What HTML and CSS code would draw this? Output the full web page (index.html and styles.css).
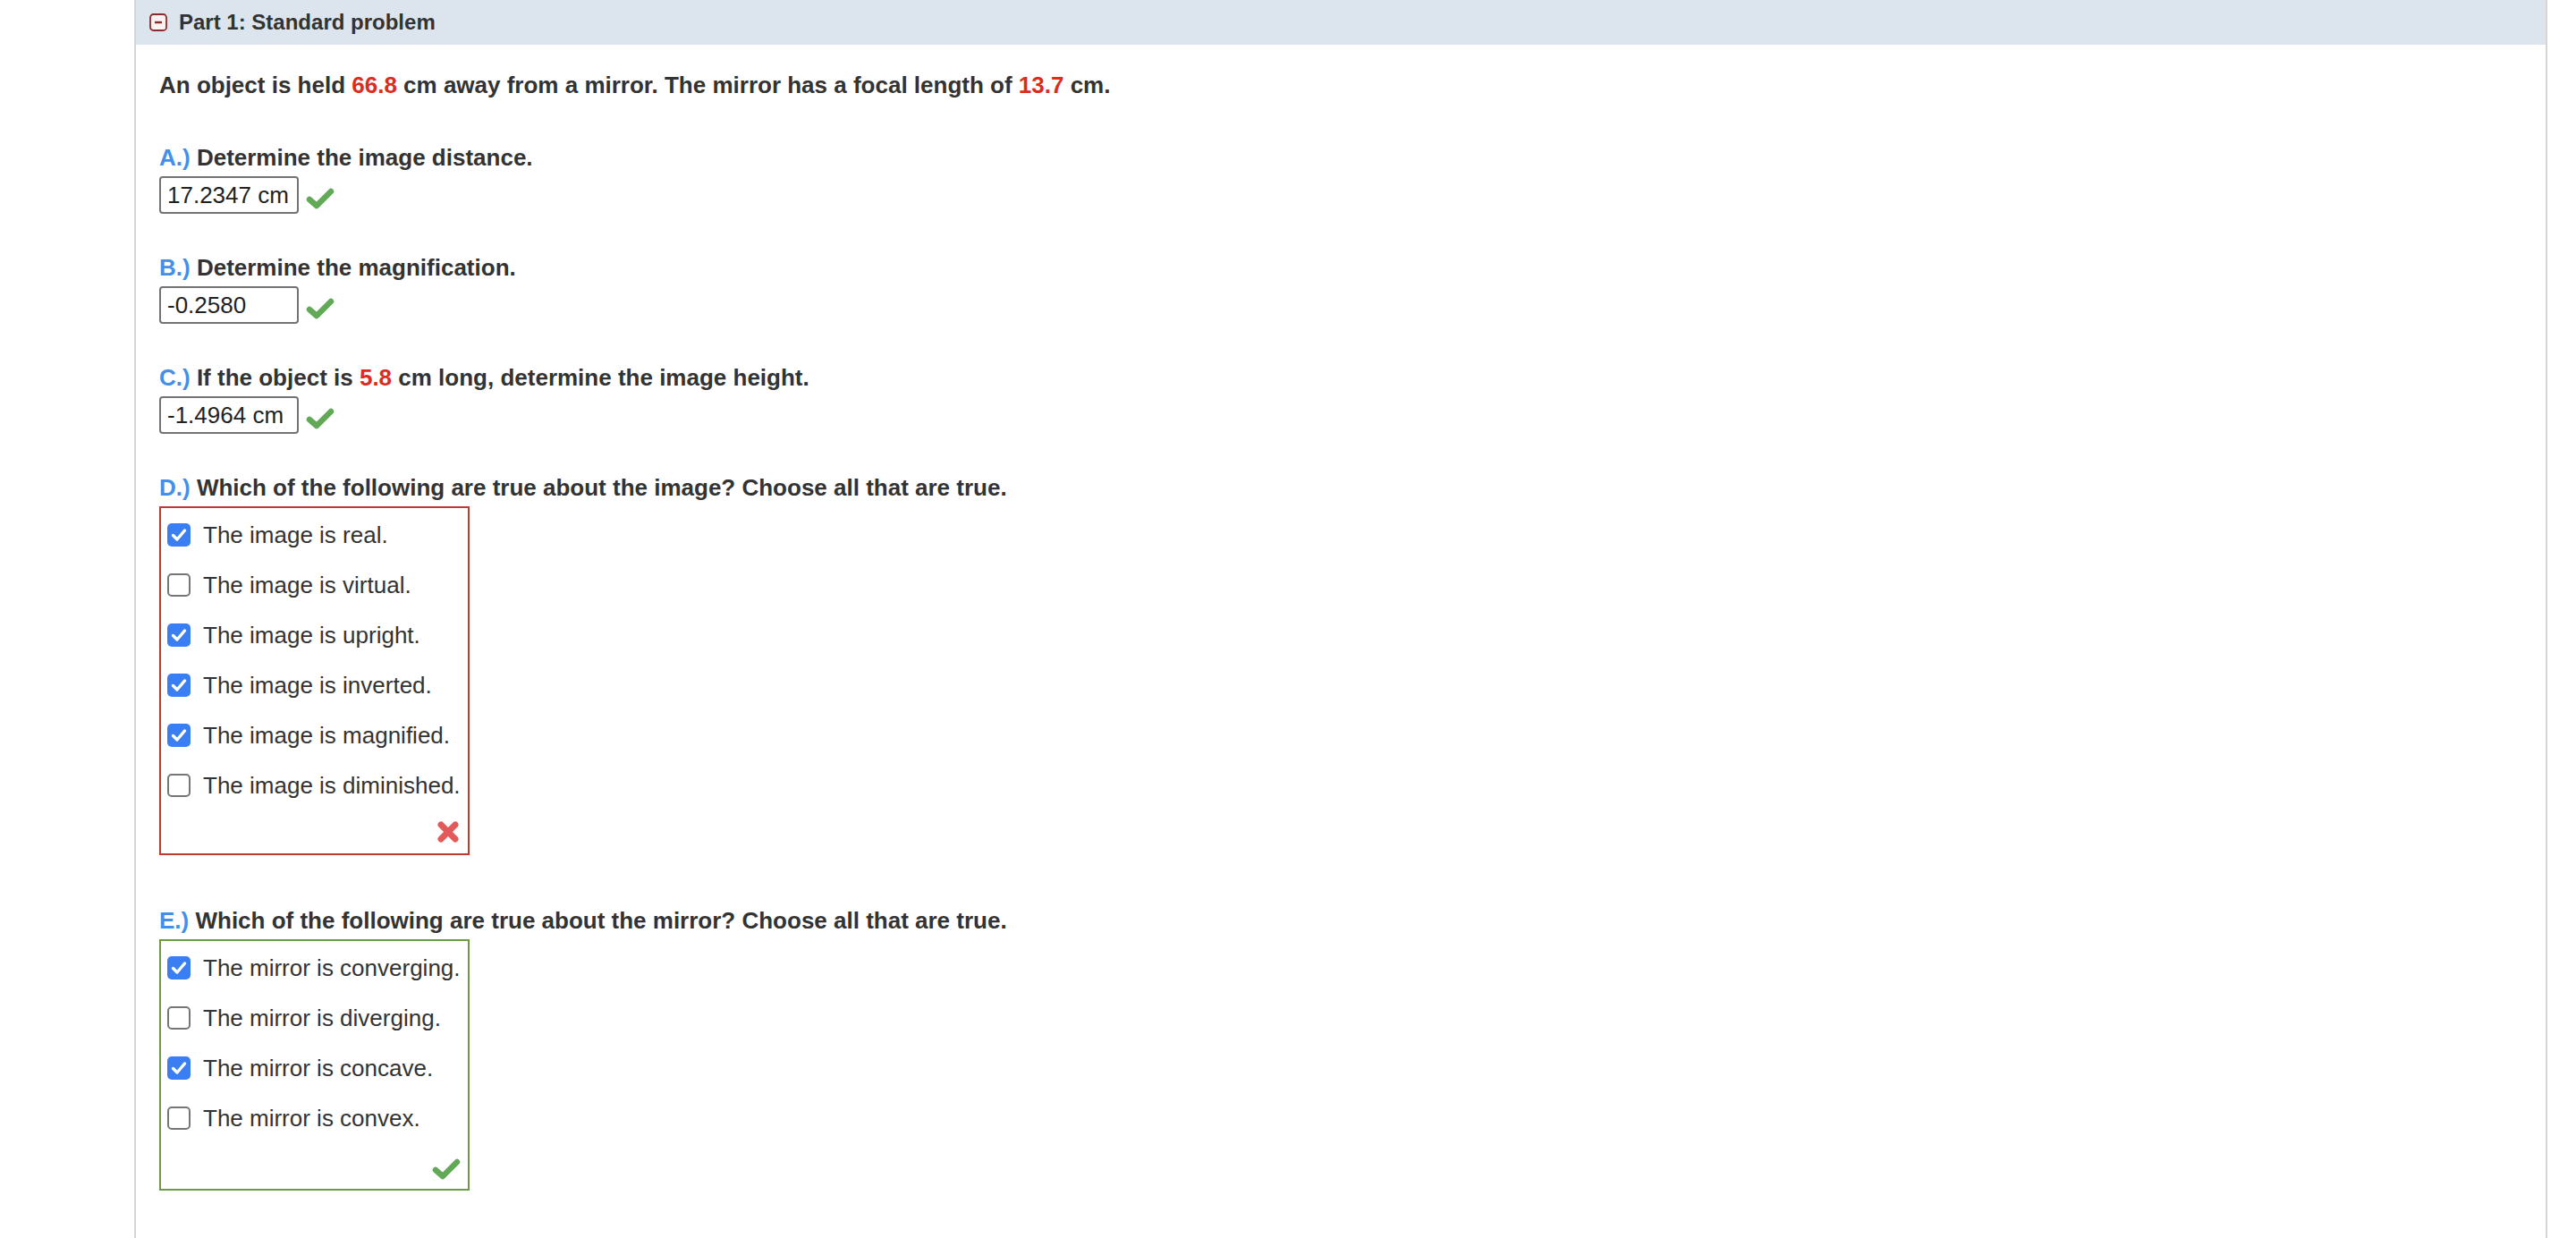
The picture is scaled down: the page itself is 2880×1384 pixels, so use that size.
FILE: index.html
```html
<!DOCTYPE html>
<html lang="en">
<head>
  <meta charset="UTF-8">
  <title>Part 1: Standard problem</title>
  <link rel="stylesheet" href="styles.css">
</head>
<body>
<div class="page">
  <div class="part-header">
    <svg class="collapse-icon" width="20" height="20" viewBox="0 0 20 20">
      <rect x="1" y="1" width="18" height="18" rx="3.5" fill="#fbf2f2" stroke="#8c2b2b" stroke-width="1.8"/>
      <line x1="6" y1="10" x2="14" y2="10" stroke="#8c2b2b" stroke-width="2.4"/>
    </svg>
    <span>Part 1: Standard problem</span>
  </div>

  <div class="part-body">
    <p class="intro">An object is held <span class="num">66.8</span> cm away from a mirror. The mirror has a focal length of <span class="num">13.7</span> cm.</p>

    <div class="question">
      <p class="prompt"><span class="letter">A.)</span> Determine the image distance.</p>
      <div class="answer-row">
        <input class="answer" type="text" value="17.2347 cm" readonly>
        <svg class="ok" width="32" height="24" viewBox="0 0 32 24"><polyline points="4,13 12,20 28,4"/></svg>
      </div>
    </div>

    <div class="question">
      <p class="prompt"><span class="letter">B.)</span> Determine the magnification.</p>
      <div class="answer-row">
        <input class="answer" type="text" value="-0.2580" readonly>
        <svg class="ok" width="32" height="24" viewBox="0 0 32 24"><polyline points="4,13 12,20 28,4"/></svg>
      </div>
    </div>

    <div class="question">
      <p class="prompt"><span class="letter">C.)</span> If the object is <span class="num">5.8</span> cm long, determine the image height.</p>
      <div class="answer-row">
        <input class="answer" type="text" value="-1.4964 cm" readonly>
        <svg class="ok" width="32" height="24" viewBox="0 0 32 24"><polyline points="4,13 12,20 28,4"/></svg>
      </div>
    </div>

    <div class="question">
      <p class="prompt"><span class="letter">D.)</span> Which of the following are true about the image? Choose all that are true.</p>
      <div class="choices wrong">
        <div class="option"><span class="box checked"><svg width="26" height="26" viewBox="0 0 26 26"><polyline points="6.5,13.5 11,18 19.5,8"/></svg></span>The image is real.</div>
        <div class="option"><span class="box"></span>The image is virtual.</div>
        <div class="option"><span class="box checked"><svg width="26" height="26" viewBox="0 0 26 26"><polyline points="6.5,13.5 11,18 19.5,8"/></svg></span>The image is upright.</div>
        <div class="option"><span class="box checked"><svg width="26" height="26" viewBox="0 0 26 26"><polyline points="6.5,13.5 11,18 19.5,8"/></svg></span>The image is inverted.</div>
        <div class="option"><span class="box checked"><svg width="26" height="26" viewBox="0 0 26 26"><polyline points="6.5,13.5 11,18 19.5,8"/></svg></span>The image is magnified.</div>
        <div class="option"><span class="box"></span>The image is diminished.</div>
        <div class="feedback">
          <svg class="bad" width="28" height="28" viewBox="0 0 28 28">
            <line x1="6" y1="6" x2="22" y2="22"/>
            <line x1="22" y1="6" x2="6" y2="22"/>
          </svg>
        </div>
      </div>
    </div>

    <div class="question">
      <p class="prompt"><span class="letter">E.)</span> Which of the following are true about the mirror? Choose all that are true.</p>
      <div class="choices right">
        <div class="option"><span class="box checked"><svg width="26" height="26" viewBox="0 0 26 26"><polyline points="6.5,13.5 11,18 19.5,8"/></svg></span>The mirror is converging.</div>
        <div class="option"><span class="box"></span>The mirror is diverging.</div>
        <div class="option"><span class="box checked"><svg width="26" height="26" viewBox="0 0 26 26"><polyline points="6.5,13.5 11,18 19.5,8"/></svg></span>The mirror is concave.</div>
        <div class="option"><span class="box"></span>The mirror is convex.</div>
        <div class="feedback">
          <svg class="ok" width="32" height="24" viewBox="0 0 32 24"><polyline points="4,13 12,20 28,4"/></svg>
        </div>
      </div>
    </div>
  </div>
</div>
</body>
</html>
```

FILE: styles.css
```css
* {
  box-sizing: border-box;
}
body {
  margin: 0;
  background: white;
  font-family: "Liberation Sans", Arial, sans-serif;
  color: #333;
}
.page {
  margin-left: 150px;
  width: 2698px;
  min-height: 100vh;
  border-left: 2px solid #d5d5d5;
  border-right: 2px solid #d5d5d5;
}
.part-header {
  height: 50px;
  background: #dce5ed;
  display: flex;
  align-items: center;
  padding-left: 15px;
  gap: 13px;
  font-size: 24px;
  font-weight: bold;
  color: #333;
}
.collapse-icon {
  display: block;
}
.part-body {
  padding: 30px 26px 0;
}
.intro {
  margin: 0 0 6px;
  font-size: 26px;
  line-height: 30px;
  font-weight: bold;
}
.num {
  color: #dd2c1f;
}
.letter {
  color: #4390e8;
}
.question {
  padding-top: 45px;
}
.prompt {
  margin: 0 0 6px;
  font-size: 26px;
  line-height: 30px;
  font-weight: bold;
}
.answer-row {
  display: flex;
  align-items: center;
  gap: 8px;
}
.answer {
  width: 156px;
  height: 42px;
  border: 2px solid #737373;
  border-radius: 4px;
  padding: 0 7px;
  font-family: "Liberation Sans", Arial, sans-serif;
  font-size: 26px;
  color: #222;
  background: white;
  outline: none;
}
.ok polyline {
  fill: none;
  stroke: #62a957;
  stroke-width: 6.5;
  stroke-linecap: round;
  stroke-linejoin: round;
}
.answer-row .ok {
  margin-top: 7px;
}
.bad line {
  stroke: #e25a5a;
  stroke-width: 7;
  stroke-linecap: round;
}
.choices {
  width: 347px;
  margin-top: 1px;
  margin-bottom: 13px;
  padding: 2px 8px 0 7px;
  border: 2px solid;
}
.choices.wrong {
  border-color: #bd3a2f;
}
.choices.right {
  border-color: #6c9b45;
}
.option {
  height: 56px;
  display: flex;
  align-items: center;
  gap: 14px;
  font-size: 26px;
  color: #333;
}
.box {
  width: 26px;
  height: 26px;
  flex: none;
  border: 2px solid #767676;
  border-radius: 5px;
  background: white;
}
.box.checked {
  border: none;
  background: #3a7ef2;
}
.box svg {
  display: block;
}
.box polyline {
  fill: none;
  stroke: white;
  stroke-width: 3.4;
  stroke-linecap: round;
  stroke-linejoin: round;
}
.feedback {
  height: 48px;
  display: flex;
  align-items: center;
  justify-content: flex-end;
}
.choices.right .feedback {
  height: 51px;
  padding-top: 6px;
}
.feedback svg {
  display: block;
}
```
